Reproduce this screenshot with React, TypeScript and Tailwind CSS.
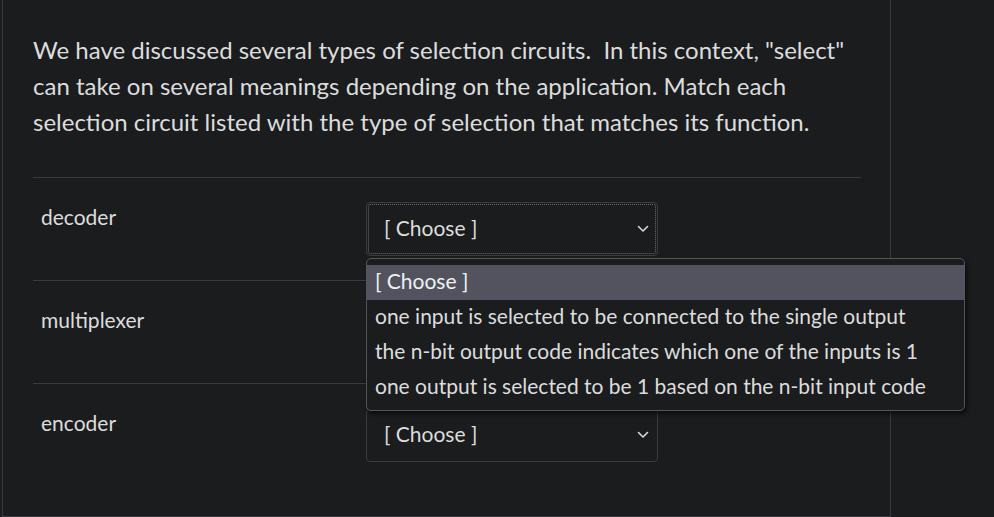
import React from "react";

const Chevron = () => (
  <svg width="12" height="8" viewBox="0 0 12 8" fill="none" className="shrink-0">
    <path d="M1.5 1.5 L6 6 L10.5 1.5" stroke="#d8d8d8" strokeWidth="1.6" strokeLinecap="round" strokeLinejoin="round" />
  </svg>
);

function SelectBox({ focused }: { focused?: boolean }) {
  return (
    <div
      className={
        "w-[292px] h-[54px] rounded-[4px] border border-[#3b3c40] bg-[#1b1c1e] flex items-center justify-between pl-[17px] pr-[8px] " +
        (focused ? "outline outline-1 outline-dotted outline-[#6a6b70] -outline-offset-[3px]" : "")
      }
    >
      <span className="text-[21px] leading-[30px] -mt-[3px] text-[#dcdcdc]">[ Choose ]</span>
      <Chevron />
    </div>
  );
}

const options = [
  "[ Choose ]",
  "one input is selected to be connected to the single output",
  "the n-bit output code indicates which one of the inputs is 1",
  "one output is selected to be 1 based on the n-bit input code",
];

export default function App() {
  return (
    <div
      className="w-[994px] h-[517px] bg-[#1b1c1e] text-[#dcdcdc] overflow-hidden relative"
      style={{ fontFamily: "Lato, 'Noto Sans', sans-serif" }}
    >
      <div className="ml-[2px] w-[889px] h-[517px] border-l border-r border-b border-[#3a3b3e] pl-[30px] pr-[29px] pt-[32px]">
        <p className="text-[24px] leading-[36px] text-[#dcdcdc] w-[848px]">
          We have discussed several types of selection circuits.&nbsp; In this context, "select" can take on several meanings depending on the application. Match each selection circuit listed with the type of selection that matches its function.
        </p>
        <div className="mt-[37px]">
          {["decoder", "multiplexer", "encoder"].map((label, i) => (
            <div key={label} className="border-t border-[#3a3b3e] h-[103px] pt-[24px] flex items-start">
              <div className="w-[333px] pl-[8px] text-[21px] leading-[30px]">{label}</div>
              <SelectBox focused={i === 0} />
            </div>
          ))}
        </div>
      </div>

      <div className="absolute left-[366px] top-[258px] w-[599px] h-[153px] rounded-[5px] border border-[#55565c] bg-[#1b1c1e] pt-[6px] shadow-[2px_3px_4px_rgba(0,0,0,0.6)]">
        {options.map((o, i) => (
          <div
            key={i}
            className={
              "h-[35px] leading-[31px] pl-[8px] text-[21px] text-[#dcdcdc] whitespace-nowrap " +
              (i === 0 ? "bg-[#52535f] text-[#f0f0f0]" : "")
            }
          >
            {o}
          </div>
        ))}
      </div>
    </div>
  );
}
